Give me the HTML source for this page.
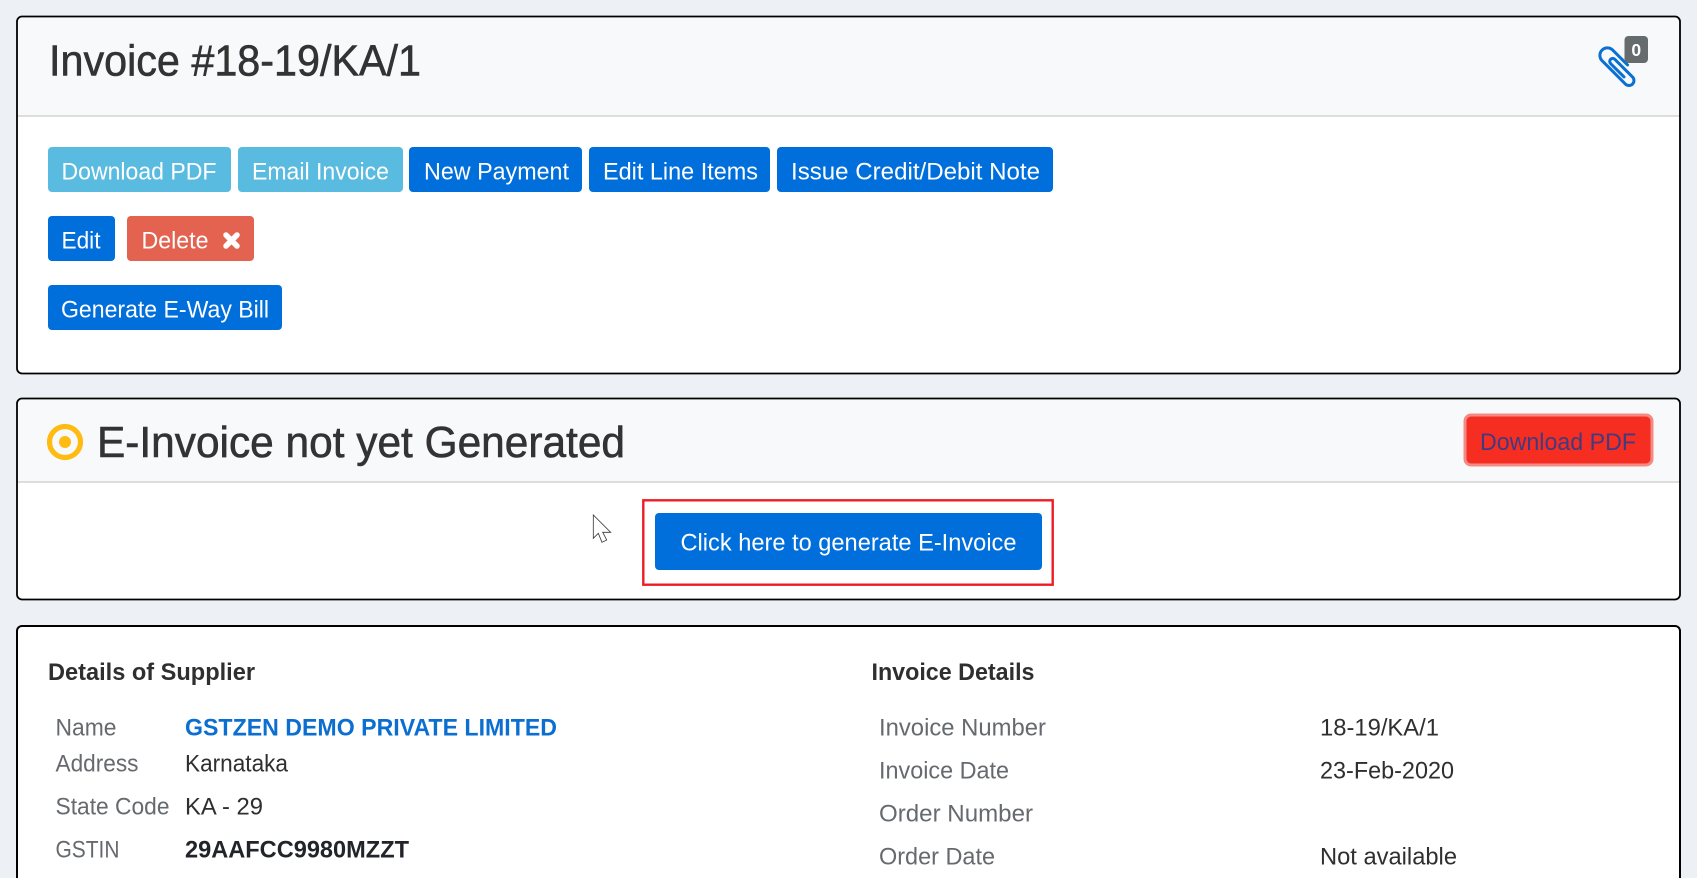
<!DOCTYPE html>
<html lang="en">
<head>
<meta charset="utf-8">
<title>Invoice #18-19/KA/1</title>
<style>
html,body{margin:0;padding:0;width:1697px;height:878px;overflow:hidden;background:#edf1f5}
svg{display:block}
text{font-family:"Liberation Sans",sans-serif;font-size:24.5px}
.w{fill:#fff}
.g{fill:#666a6e}
.d{fill:#2f2f2f}
.b{font-weight:700}
.h{font-size:44px;fill:#333;stroke:#333;stroke-width:.6px}
</style>
</head>
<body>
<svg width="1697" height="878" viewBox="0 0 1697 878" xmlns="http://www.w3.org/2000/svg">
<rect width="1697" height="878" fill="#edf1f5"/>

<!-- Card 1 -->
<rect x="17" y="16.500" width="1663" height="357" rx="5" fill="#fff"/>
<path d="M17 116V21.500a5 5 0 0 1 5-5H1675a5 5 0 0 1 5 5V116Z" fill="#f8f9fa"/>
<rect x="17" y="115" width="1663" height="2" fill="#dcdddd"/>
<rect x="17" y="16.500" width="1663" height="357" rx="5" fill="none" stroke="#000" stroke-width="1.800"/>
<text class="h" x="49" y="75.500" textLength="372" lengthAdjust="spacingAndGlyphs">Invoice #18-19/KA/1</text>

<!-- Paperclip -->
<g transform="translate(1618 66) rotate(-45)" fill="none" stroke="#0a70d2" stroke-width="3" stroke-linecap="round">
<path d="M7.500 6V-15a7.500 7.500 0 0 0-15 0V18a5 5 0 0 0 10 0V-7a3 3 0 0 0-6 0V12"/>
</g>
<rect x="1624.500" y="36" width="23.500" height="27" rx="4" fill="#666b6e"/>
<text x="1636.200" y="56" text-anchor="middle" class="b" style="font-size:17.500px" fill="#fff">0</text>

<!-- Row 1 buttons -->
<rect x="48" y="147" width="183" height="45" rx="4" fill="#5abbe0"/>
<rect x="238" y="147" width="165" height="45" rx="4" fill="#5abbe0"/>
<rect x="409" y="147" width="173" height="45" rx="4" fill="#006fdc"/>
<rect x="589" y="147" width="181" height="45" rx="4" fill="#006fdc"/>
<rect x="777" y="147" width="276" height="45" rx="4" fill="#006fdc"/>
<text class="w" x="61.500" y="179.500" textLength="155" lengthAdjust="spacingAndGlyphs">Download PDF</text>
<text class="w" x="252" y="179.500" textLength="137" lengthAdjust="spacingAndGlyphs">Email Invoice</text>
<text class="w" x="424" y="179.500" textLength="145" lengthAdjust="spacingAndGlyphs">New Payment</text>
<text class="w" x="603" y="179.500" textLength="155" lengthAdjust="spacingAndGlyphs">Edit Line Items</text>
<text class="w" x="791" y="179.500" textLength="249" lengthAdjust="spacingAndGlyphs">Issue Credit/Debit Note</text>

<!-- Row 2 -->
<rect x="48" y="216" width="67" height="45" rx="4" fill="#006fdc"/>
<rect x="127" y="216" width="127" height="45" rx="4" fill="#e46250"/>
<text class="w" x="61.500" y="248.500" textLength="39" lengthAdjust="spacingAndGlyphs">Edit</text>
<text class="w" x="141.500" y="248.500" textLength="67" lengthAdjust="spacingAndGlyphs">Delete</text>
<path d="M226 235l5.500 5.500M237 235l-5.500 5.500M226 246l5.500-5.500M237 246l-5.500-5.500" stroke="#fff" stroke-width="5.500" stroke-linecap="round" fill="none"/>

<!-- Row 3 -->
<rect x="48" y="285" width="234" height="45" rx="4" fill="#006fdc"/>
<text class="w" x="61" y="317.500" textLength="208" lengthAdjust="spacingAndGlyphs">Generate E-Way Bill</text>

<!-- Card 2 -->
<rect x="17" y="398.500" width="1663" height="201" rx="5" fill="#fff"/>
<path d="M17 482V403.500a5 5 0 0 1 5-5H1675a5 5 0 0 1 5 5V482Z" fill="#f8f9fa"/>
<rect x="17" y="481" width="1663" height="2" fill="#dcdddd"/>
<rect x="17" y="398.500" width="1663" height="201" rx="5" fill="none" stroke="#000" stroke-width="1.800"/>

<circle cx="65" cy="442" r="15.500" fill="none" stroke="#ffbb11" stroke-width="5.200"/>
<circle cx="65" cy="442" r="6" fill="#ffbb11"/>
<text class="h" x="97" y="457" textLength="528" lengthAdjust="spacingAndGlyphs">E-Invoice not yet Generated</text>

<rect x="1465" y="415" width="187" height="50" rx="6" fill="#f62e22" stroke="#f28b86" stroke-width="3"/>
<text x="1480" y="450" textLength="156" lengthAdjust="spacingAndGlyphs" fill="#413a80">Download PDF</text>

<!-- Cursor -->
<path d="M593.300 515V538.300L598.300 533.300 602 542.300 606.700 540 602.700 532.300H610.700Z" fill="#fff" stroke="#333" stroke-width=".8"/>

<!-- Highlight + main button -->
<rect x="655" y="513" width="387" height="57" rx="4" fill="#006fdc"/>
<text class="w" x="680.500" y="550.500" textLength="336" lengthAdjust="spacingAndGlyphs">Click here to generate E-Invoice</text>
<rect x="643.300" y="500.300" width="409.400" height="84.400" fill="none" stroke="#ee1c25" stroke-width="2.400"/>

<!-- Card 3 -->
<path d="M17 878V631a5 5 0 0 1 5-5H1675a5 5 0 0 1 5 5V878" fill="#fff" stroke="#000" stroke-width="2"/>

<text class="d b" x="48" y="680" textLength="207" lengthAdjust="spacingAndGlyphs">Details of Supplier</text>
<text class="g" x="55.500" y="735.500" textLength="61" lengthAdjust="spacingAndGlyphs">Name</text>
<text class="b" x="185" y="735.500" textLength="372" lengthAdjust="spacingAndGlyphs" fill="#0a6fd0">GSTZEN DEMO PRIVATE LIMITED</text>
<text class="g" x="55.500" y="771.500" textLength="83" lengthAdjust="spacingAndGlyphs">Address</text>
<text class="d" x="185" y="771.500" textLength="103" lengthAdjust="spacingAndGlyphs">Karnataka</text>
<text class="g" x="55.500" y="814.500" textLength="114" lengthAdjust="spacingAndGlyphs">State Code</text>
<text class="d" x="185" y="814.500" textLength="78" lengthAdjust="spacingAndGlyphs">KA - 29</text>
<text class="g" x="55.500" y="857.500" textLength="64" lengthAdjust="spacingAndGlyphs">GSTIN</text>
<text class="b" x="185" y="857.500" textLength="224" lengthAdjust="spacingAndGlyphs" fill="#212529">29AAFCC9980MZZT</text>

<text class="d b" x="871.500" y="680" textLength="163" lengthAdjust="spacingAndGlyphs">Invoice Details</text>
<text class="g" x="879" y="735.500" textLength="167" lengthAdjust="spacingAndGlyphs">Invoice Number</text>
<text class="d" x="1320" y="735.500" textLength="119" lengthAdjust="spacingAndGlyphs">18-19/KA/1</text>
<text class="g" x="879" y="778.500" textLength="130" lengthAdjust="spacingAndGlyphs">Invoice Date</text>
<text class="d" x="1320" y="778.500" textLength="134" lengthAdjust="spacingAndGlyphs">23-Feb-2020</text>
<text class="g" x="879" y="821.500" textLength="154" lengthAdjust="spacingAndGlyphs">Order Number</text>
<text class="g" x="879" y="864.500" textLength="116" lengthAdjust="spacingAndGlyphs">Order Date</text>
<text class="d" x="1320" y="864.500" textLength="137" lengthAdjust="spacingAndGlyphs">Not available</text>
</svg>
</body>
</html>
